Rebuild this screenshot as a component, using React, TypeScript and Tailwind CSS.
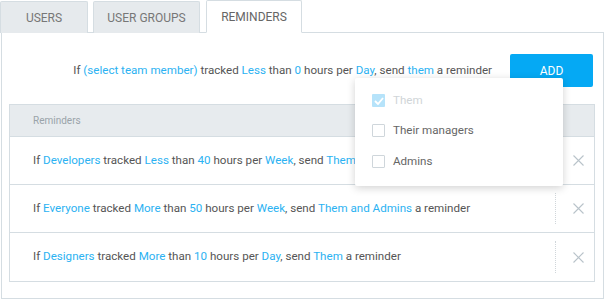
import React from 'react';

type Part = { t: string; link?: boolean };

const rows: Part[][] = [
  [
    { t: 'If ' }, { t: 'Developers', link: true }, { t: ' tracked ' }, { t: 'Less', link: true },
    { t: ' than ' }, { t: '40', link: true }, { t: ' hours per ' }, { t: 'Week', link: true },
    { t: ', send ' }, { t: 'Them', link: true }, { t: ' a reminder' },
  ],
  [
    { t: 'If ' }, { t: 'Everyone', link: true }, { t: ' tracked ' }, { t: 'More', link: true },
    { t: ' than ' }, { t: '50', link: true }, { t: ' hours per ' }, { t: 'Week', link: true },
    { t: ', send ' }, { t: 'Them and Admins', link: true }, { t: ' a reminder' },
  ],
  [
    { t: 'If ' }, { t: 'Designers', link: true }, { t: ' tracked ' }, { t: 'More', link: true },
    { t: ' than ' }, { t: '10', link: true }, { t: ' hours per ' }, { t: 'Day', link: true },
    { t: ', send ' }, { t: 'Them', link: true }, { t: ' a reminder' },
  ],
];

const Sentence: React.FC<{ parts: Part[] }> = ({ parts }) => (
  <span className="whitespace-pre">
    {parts.map((p, i) => (
      <span key={i} className={p.link ? 'text-[#2bb2f2]' : ''}>{p.t}</span>
    ))}
  </span>
);

const CloseIcon = () => (
  <svg width="11" height="11" viewBox="0 0 11 11" className="text-[#b9c3ca]">
    <path d="M0.5 0.5 L10.5 10.5 M10.5 0.5 L0.5 10.5" stroke="currentColor" strokeWidth="1.1" fill="none" />
  </svg>
);

const Checkbox: React.FC<{ checked?: boolean }> = ({ checked }) =>
  checked ? (
    <span className="w-[13px] h-[13px] rounded-[1px] bg-[#b6e3fa] flex items-center justify-center">
      <svg width="10" height="8" viewBox="0 0 10 8">
        <path d="M1 4 L4 7 L9 1" stroke="white" strokeWidth="1.8" fill="none" />
      </svg>
    </span>
  ) : (
    <span className="w-[13px] h-[13px] rounded-[1px] border border-[#cfd6db] bg-white" />
  );

export default function App() {
  const tabs = [
    { label: 'USERS', w: 'w-[88px]', active: false },
    { label: 'USER GROUPS', w: 'w-[107px]', active: false },
    { label: 'REMINDERS', w: 'w-[96px]', active: true },
  ];

  return (
    <div className="w-[605px] h-[300px] bg-white text-[#555] text-[11.6px]" style={{ fontFamily: 'Roboto, "Liberation Sans", sans-serif' }}>
      {/* Tabs */}
      <div className="flex items-end gap-[5px] h-[33px] relative z-10">
        {tabs.map((tab) => (
          <div
            key={tab.label}
            className={`${tab.w} flex items-center justify-center border border-[#d5dde2] ${
              tab.active
                ? 'h-[33px] bg-white border-b-white text-[#666]'
                : 'h-[32px] bg-[#e6eaed] border-b-0 text-[#777]'
            } rounded-t-[2px] text-[12px] ${tab.active ? 'ml-px' : ''}`}
          >
            {tab.label}
          </div>
        ))}
      </div>

      {/* Panel */}
      <div className="relative ml-px w-[603px] h-[267px] -mt-px border border-[#d5dde2] bg-white">
        <div className="flex items-center justify-end pt-[21px] pr-[10px]">
          <Sentence
            parts={[
              { t: 'If ' }, { t: '(select team member)', link: true }, { t: ' tracked ' },
              { t: 'Less', link: true }, { t: ' than ' }, { t: '0', link: true }, { t: ' hours per ' },
              { t: 'Day', link: true }, { t: ', send ' }, { t: 'them', link: true }, { t: ' a reminder' },
            ]}
          />
          <button className="ml-[18px] w-[83px] h-[33px] rounded-[2px] bg-[#05a9f4] text-white text-[12px]">ADD</button>
        </div>

        {/* Table */}
        <div className="mt-[17px] ml-[7px] w-[586px] border border-[#d5dde2]">
          <div className="h-[32px] bg-[#e7ebee] border-b border-[#d5dde2] flex items-center pl-[23px] text-[10px] text-[#9aa3a9]">
            Reminders
          </div>
          {rows.map((r, i) => (
            <div key={i} className={`h-[48px] flex items-stretch ${i < rows.length - 1 ? 'border-b border-[#d5dde2]' : ''}`}>
              <div className="flex-1 flex items-center pl-[23px]">
                <Sentence parts={r} />
              </div>
              <div className="w-[39px] flex items-center pl-[17px] border-l border-dotted border-[#d0d6da] my-[8px]">
                <CloseIcon />
              </div>
            </div>
          ))}
        </div>

        {/* Dropdown */}
        <div className="absolute left-[353px] top-[45px] w-[208px] h-[108px] bg-white rounded-[2px] shadow-[0_2px_8px_rgba(0,0,0,0.18)] flex flex-col justify-center gap-[13px] pl-[17px] pb-[2px]">
          <div className="flex items-center gap-[8px] text-[#d0d5d8]">
            <Checkbox checked />
            <span>Them</span>
          </div>
          <div className="flex items-center gap-[8px] text-[#666]">
            <Checkbox />
            <span>Their managers</span>
          </div>
          <div className="flex items-center gap-[8px] text-[#666]">
            <Checkbox />
            <span>Admins</span>
          </div>
        </div>
      </div>
    </div>
  );
}
